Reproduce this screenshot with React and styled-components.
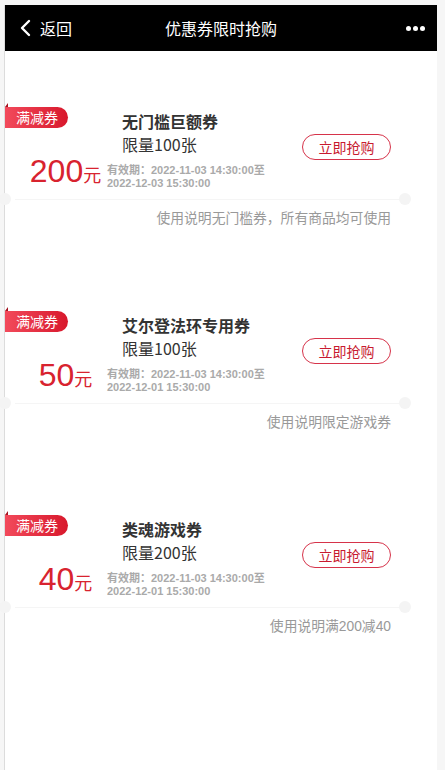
import React from 'react'
import styled, { createGlobalStyle } from 'styled-components'

const GlobalStyle = createGlobalStyle`
  body {
    margin: 0;
    background: #f6f6f6;
    font-family: "Liberation Sans", "Noto Sans CJK SC", sans-serif;
  }
`

const Frame = styled.div`
  margin: 5px 0 0 4px;
  width: 432px;
  min-height: 765px;
  background: #fff;
  border-left: 1px solid #dcdcdc;
`

const NavBar = styled.div`
  height: 46px;
  background: #000;
  color: #fff;
  display: grid;
  grid-template-columns: 1fr auto 1fr;
  align-items: center;
  font-size: 16px;
  font-family: "Noto Sans CJK SC", sans-serif;
`

const Back = styled.div`
  display: flex;
  align-items: center;
  gap: 7px;
  padding-left: 14px;
`

const Title = styled.div`
  line-height: 20px;
`

const More = styled.div`
  display: flex;
  justify-content: flex-end;
  gap: 2px;
  padding-right: 12px;
`

const Dot = styled.span`
  width: 5px;
  height: 5px;
  border-radius: 50%;
  background: #fff;
`

const List = styled.div`
  padding-top: 56px;
`

const Card = styled.div`
  position: relative;
  width: 386px;
  padding: 2px 16px 0 0;
  margin-bottom: 82px;
`

const Tag = styled.div`
  position: absolute;
  top: 0;
  left: 0;
  width: 52px;
  height: 21px;
  padding-left: 11px;
  border-radius: 0 11px 11px 0;
  background: linear-gradient(90deg, #f24a5b, #d8182c);
  color: #fff;
  font-family: "Noto Sans CJK SC", sans-serif;
  font-size: 14px;
  line-height: 21px;

  &::before {
    content: '';
    position: absolute;
    top: -4px;
    left: 0;
    border-left: 3px solid transparent;
    border-bottom: 4px solid #a3121f;
  }
`

const Body = styled.div`
  display: flex;
  align-items: flex-start;
`

const Left = styled.div`
  flex: 1;
`

const Info = styled.div`
  padding-left: 117px;
  color: #333;
  font-family: "Noto Sans CJK SC", sans-serif;
  font-size: 16px;
`

const Name = styled.div`
  font-weight: bold;
  line-height: 24px;
`

const Quota = styled.div`
  line-height: 22px;
`

const PriceRow = styled.div`
  display: flex;
  align-items: flex-start;
`

const Price = styled.div`
  width: 83px;
  margin-left: 19px;
  text-align: center;
  color: #d8232f;
  font-size: 32px;
  line-height: 32px;
  white-space: nowrap;
`

const Unit = styled.span`
  font-family: "Noto Sans CJK SC", sans-serif;
  font-size: 18px;
`

const Validity = styled.div`
  margin-top: 9px;
  color: #aaa;
  font-size: 11px;
  font-weight: bold;
  line-height: 13px;
  white-space: nowrap;
`

const BuyButton = styled.button`
  margin-top: 25px;
  width: 89px;
  height: 26px;
  padding: 0;
  border: 1px solid #d6334a;
  border-radius: 13px;
  background: #fff;
  color: #c81a30;
  font-family: "Noto Sans CJK SC", sans-serif;
  font-size: 14px;
  line-height: 24px;
`

const Divider = styled.div`
  position: relative;
  margin: 9px 0 0 10px;
  width: 388px;
  height: 1px;
  background: #f5f5f5;

  &::before,
  &::after {
    content: '';
    position: absolute;
    top: -6px;
    width: 12px;
    height: 12px;
    border-radius: 50%;
    background: #f4f4f4;
  }
  &::before { left: -16px; }
  &::after { right: -8px; }
`

const Desc = styled.div`
  margin-top: 9px;
  text-align: right;
  color: #999;
  font-family: "Liberation Sans", "Noto Sans CJK SC", sans-serif;
  font-size: 13.8px;
  line-height: 20px;
`

const coupons = [
  { name: '无门槛巨额券', quota: '限量100张', price: 200, from: '2022-11-03 14:30:00', to: '2022-12-03 15:30:00', desc: '使用说明无门槛券，所有商品均可使用' },
  { name: '艾尔登法环专用券', quota: '限量100张', price: 50, from: '2022-11-03 14:30:00', to: '2022-12-01 15:30:00', desc: '使用说明限定游戏券' },
  { name: '类魂游戏券', quota: '限量200张', price: 40, from: '2022-11-03 14:30:00', to: '2022-12-01 15:30:00', desc: '使用说明满200减40' },
]

function Coupon({ c }) {
  return (
    <Card>
      <Tag>满减券</Tag>
      <Body>
        <Left>
          <Info>
            <Name>{c.name}</Name>
            <Quota>{c.quota}</Quota>
          </Info>
          <PriceRow>
            <Price>{c.price}<Unit>元</Unit></Price>
            <Validity>
              有效期：{c.from}至<br />{c.to}
            </Validity>
          </PriceRow>
        </Left>
        <BuyButton>立即抢购</BuyButton>
      </Body>
      <Divider />
      <Desc>{c.desc}</Desc>
    </Card>
  )
}

function App() {
  return (
    <>
      <GlobalStyle />
      <Frame>
        <NavBar>
          <Back>
            <svg width="14" height="18" viewBox="0 0 14 18">
              <polyline points="10,2 3,9 10,16" fill="none" stroke="#fff" strokeWidth="2.4" strokeLinecap="round" strokeLinejoin="round" />
            </svg>
            <span>返回</span>
          </Back>
          <Title>优惠券限时抢购</Title>
          <More>
            <Dot /><Dot /><Dot />
          </More>
        </NavBar>
        <List>
          {coupons.map((c) => <Coupon key={c.name} c={c} />)}
        </List>
      </Frame>
    </>
  )
}

export default App
